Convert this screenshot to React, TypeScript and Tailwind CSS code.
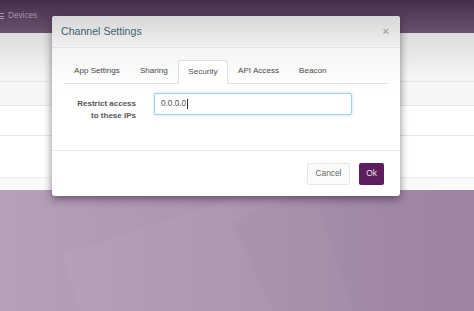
export default function App() {
  const tabs = ["App Settings", "Sharing", "Security", "API Access", "Beacon"];
  return (
    <div className="relative flex h-[311px] w-[474px] flex-col overflow-hidden font-['Liberation_Sans',Arial,sans-serif]">
      {/* top navigation bar */}
      <div className="flex h-[33px] items-center bg-gradient-to-b from-[#43304a] to-[#6a526d]">
        <div className="flex items-center gap-[4px] text-[8.2px] text-[#a594a8]">
          <span className="flex h-[6px] w-[4px] flex-col justify-between">
            <span className="h-[1px] w-full bg-[#a594a8]" />
            <span className="h-[1px] w-full bg-[#a594a8]" />
            <span className="h-[1px] w-full bg-[#a594a8]" />
          </span>
          <span>Devices</span>
        </div>
      </div>

      {/* page content behind the modal */}
      <div className="flex h-[157px] flex-col bg-white">
        <div className="h-[49px] border-b border-[#e4e4e4] bg-gradient-to-b from-[#dcdcdc] to-[#f7f7f7]" />
        <div className="h-[24px] border-b border-[#e6e6e6] bg-[#f6f6f6]" />
        <div className="h-[30px] border-b border-[#e6e6e6] bg-white" />
        <div className="h-[42px] border-b border-[#ececec] bg-white" />
        <div className="flex-1 bg-[#fafafa]" />
      </div>

      {/* lavender backdrop */}
      <div className="relative flex-1 overflow-hidden bg-gradient-to-r from-[#b5a1b9] via-[#ac94af] to-[#a087a6]">
        <div className="absolute left-[80px] top-[20px] h-[160px] w-[260px] rotate-[-18deg] bg-white/[0.03]" />
        <div className="absolute left-[260px] top-[-40px] h-[200px] w-[300px] rotate-[-25deg] bg-black/[0.02]" />
      </div>

      {/* modal */}
      <div className="absolute left-[52px] top-[16px] flex h-[180px] w-[348px] flex-col overflow-hidden rounded-[3px] bg-white shadow-[0_3px_8px_rgba(40,20,45,0.55)]">
        <div className="flex h-[32px] items-center justify-between border-b border-[#e2e2e2] bg-gradient-to-b from-[#d6d6d6] to-[#f1f1f1] pl-[9px] pr-[11px]">
          <span className="text-[10.6px] text-[#3b6272]">Channel Settings</span>
          <span className="text-[11px] font-bold leading-none text-[#a8a8a8]">×</span>
        </div>

        <div className="flex-1 bg-gradient-to-b from-[#f4f4f4] to-white to-[40%] px-[12px] pt-[12px]">
          <div className="flex h-[24px] items-end border-b border-[#e2e2e2]">
            {tabs.map((t) => (
              <div
                key={t}
                className={
                  t === "Security"
                    ? "-mb-[1px] flex h-[24px] items-center rounded-t-[3px] border border-b-0 border-[#dedede] bg-white px-[9.5px] text-[8.1px] text-[#4f4f4f]"
                    : "flex h-[24px] items-center px-[10px] text-[8.1px] text-[#4a4a4a]"
                }
              >
                {t}
              </div>
            ))}
          </div>

          <div className="mt-[9px] flex items-start">
            <div className="w-[72px] pt-[5px] text-right text-[8px] font-bold leading-[12px] text-[#555]">
              Restrict access
              <br />
              to these IPs
            </div>
            <div className="ml-[18px] flex h-[22px] w-[198px] items-center rounded-[2px] border border-[#9bd3e3] bg-white pl-[6px] text-[8.2px] text-[#555] shadow-[0_0_3px_rgba(102,175,233,0.45)]">
              0.0.0.0<span className="ml-[0.5px] h-[10px] w-[1px] bg-[#333]" />
            </div>
          </div>
        </div>

        <div className="flex h-[46px] items-center justify-end gap-[9px] border-t border-[#ececec] pr-[16px]">
          <div className="flex h-[22px] w-[43px] items-center justify-center rounded-[2px] border border-[#e6e6e6] bg-[#fbfbfb] text-[8.3px] text-[#666]">
            Cancel
          </div>
          <div className="flex h-[22px] w-[25px] items-center justify-center rounded-[2px] bg-[#5c1e5d] text-[8.3px] text-[#f0e4f0]">
            Ok
          </div>
        </div>
      </div>
    </div>
  );
}
